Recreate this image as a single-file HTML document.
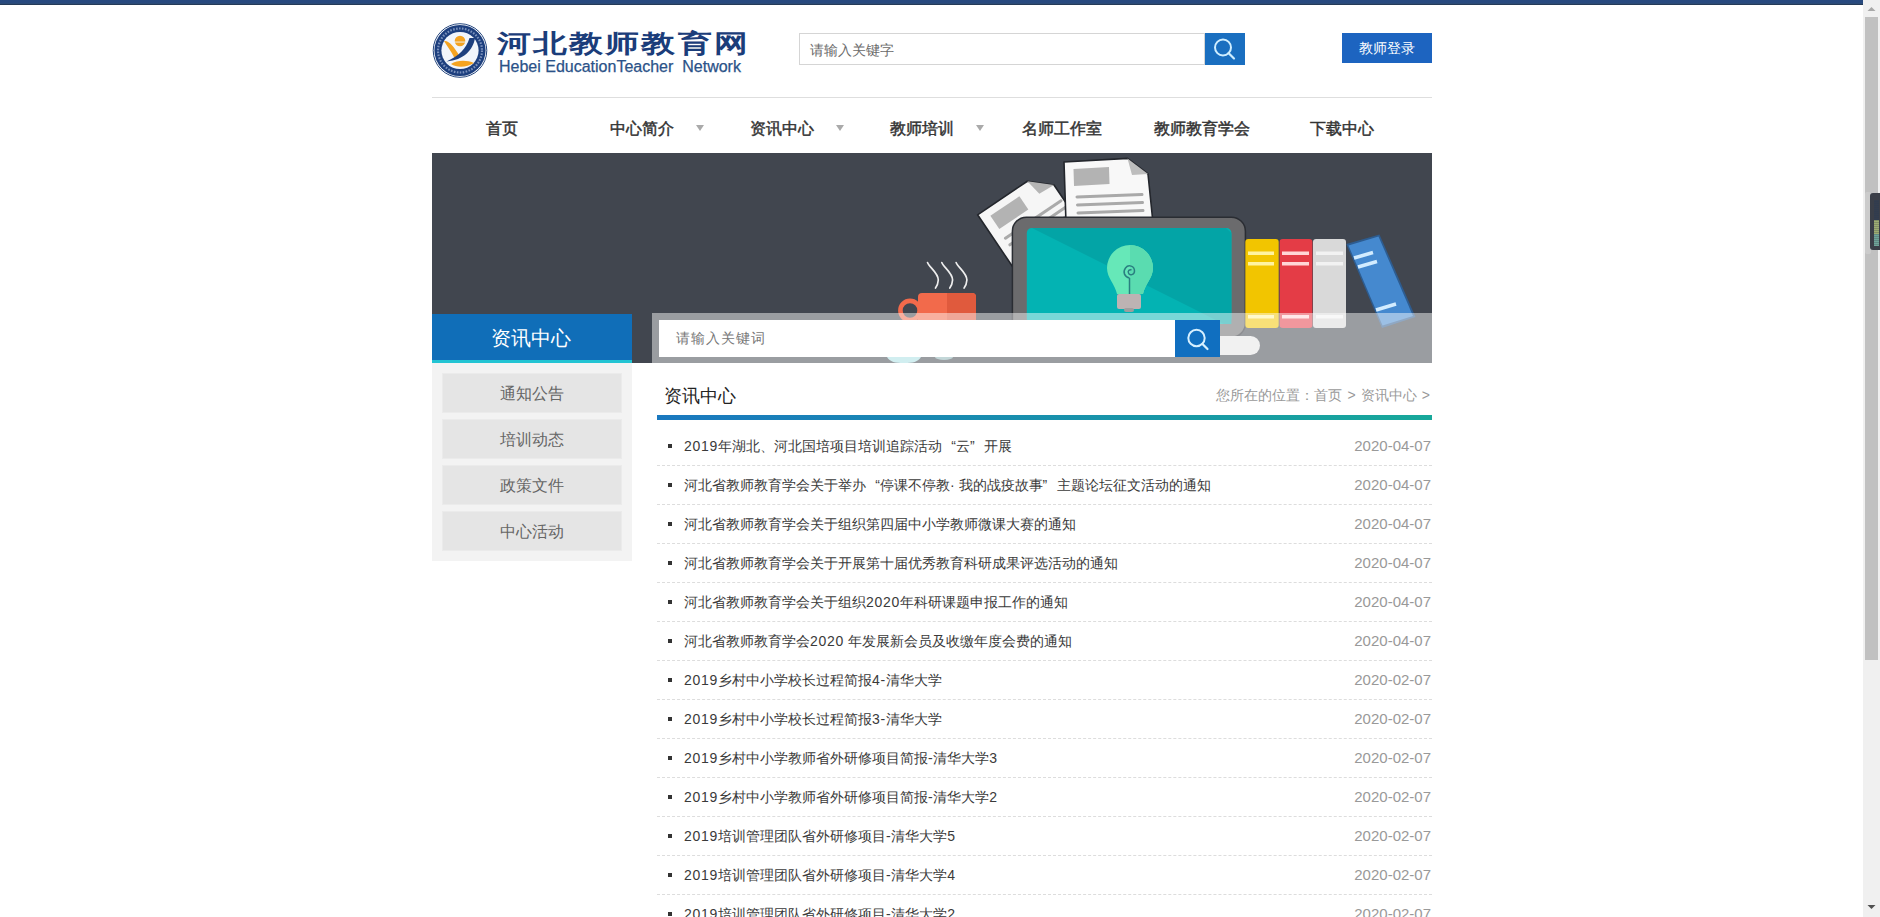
<!DOCTYPE html>
<html><head><meta charset="utf-8">
<style>
html,body{margin:0;padding:0;background:#fff;overflow:hidden;width:1880px;height:917px;}
body{font-family:"Liberation Sans",sans-serif;position:relative;}
.a{position:absolute;}
#topbar{left:0;top:0;width:1863px;height:4px;background:linear-gradient(#27497f 0,#27497f 60%,#2d4b72 100%);border-bottom:1px solid #243a58;}
#sb{left:1863px;top:0;width:17px;height:917px;background:#f0f0f0;}
#thumb{left:1865px;top:17px;width:13px;height:643px;background:#c1c1c1;}
.logo-cn{left:497px;top:26px;font-size:29px;font-weight:900;color:#1b3d7a;letter-spacing:2px;white-space:nowrap;line-height:40px;transform-origin:0 0;transform:scale(1.165,0.86);}
.logo-en{left:499px;top:57px;font-size:16px;-webkit-text-stroke:0.25px #2b5288;color:#2b5288;white-space:nowrap;line-height:20px;}
#sinput{left:799px;top:33px;width:404px;height:30px;border:1px solid #d5d5d5;}
#sinput span{position:absolute;left:10px;top:1px;line-height:30px;font-size:14px;color:#6a6a6a;}
#sbtn{left:1205px;top:33px;width:40px;height:32px;background:#1a6fc0;}
#login{left:1342px;top:33px;width:90px;height:30px;background:#1d64c0;color:#fff;font-size:14px;line-height:30px;text-align:center;}
#hr{left:432px;top:97px;width:1000px;height:1px;background:#dedede;}
.nav{top:111px;width:140px;height:36px;line-height:36px;text-align:center;font-size:16px;font-weight:normal;-webkit-text-stroke:0.45px #333;color:#333;}
.nav i{position:absolute;right:8px;top:14px;width:0;height:0;border-left:4px solid transparent;border-right:4px solid transparent;border-top:6px solid #aaa;}
#banner{left:432px;top:153px;width:1000px;height:210px;background:#41464f;overflow:hidden;}
#stitle{left:432px;top:314px;width:200px;height:45px;padding-top:1px;background:#106eb8;border-bottom:3px solid #22c4d3;color:#fff;font-size:20px;line-height:46px;text-indent:-2px;text-align:center;}
#side{left:432px;top:363px;width:200px;height:198px;background:#f3f3f3;}
.si{left:442px;width:178px;height:37px;padding-top:1px;background:#e5e5e5;border:1px solid #ebebeb;color:#666;font-size:16px;line-height:38px;text-align:center;}
#ctitle{left:664px;top:383px;font-size:18px;color:#222;line-height:26px;}
#crumb{left:1100px;width:330px;top:384px;font-size:14px;color:#999;text-align:right;line-height:22px;word-spacing:1.2px;}
#cline{left:657px;top:415px;width:775px;height:5px;background:linear-gradient(to right,#1a78bf,#17a89a);}
.row{left:657px;width:775px;height:38px;border-bottom:1px dashed #ddd;font-size:14px;line-height:38px;color:#3a3a3a;}
.row b{position:absolute;left:11px;top:17px;width:4px;height:4px;background:#333;}
.row span i{font-style:normal;}
.row span{position:absolute;left:27px;top:0;white-space:nowrap;}
.row em{position:absolute;right:1px;top:0;font-style:normal;color:#999;font-size:15px;letter-spacing:0px;}
.q{display:inline-block;width:14px;}
.d{letter-spacing:0.7px;}
.qa{text-align:right;}
</style></head><body>
<div class="a" id="topbar"></div>

<!-- logo -->
<svg class="a" style="left:432px;top:23px" width="56" height="56" viewBox="0 0 56 56">
  <circle cx="28" cy="27.5" r="26.8" fill="#fff" stroke="#27487f" stroke-width="1"/>
  <circle cx="28" cy="27.5" r="25.6" fill="#1d3f7e"/>
  <circle cx="28" cy="27.5" r="22" fill="none" stroke="#c9d6ee" stroke-width="2.2" stroke-dasharray="1.6 1.4" opacity="0.55"/>
  <circle cx="28" cy="27.5" r="18.6" fill="#f1f5fb"/>
  <circle cx="28" cy="18" r="5.3" fill="#f4a321"/>
  <rect x="22" y="18.6" width="12" height="0.9" fill="#f1f5fb"/>
  <path d="M12 18 C17 17 22 24 27 32 L22.5 35 C19 28 15 23 12 18z" fill="#f4a321"/>
  <path d="M43 15 C41 27 32 37 14.5 38.5 C27 33 34 26 37.5 15z" fill="#1d3f7e"/>
  <path d="M19 41 C25 37 35 37 42 40 C35 44.5 25 45 19 41z" fill="#f4a321"/>
</svg>
<div class="a logo-cn">河北教师教育网</div>
<div class="a logo-en">Hebei EducationTeacher&nbsp; Network</div>

<div class="a" id="sinput"><span>请输入关键字</span></div>
<div class="a" id="sbtn">
  <svg width="40" height="32" viewBox="0 0 40 32"><circle cx="18" cy="14.5" r="8" fill="none" stroke="#cfeeff" stroke-width="2"/><path d="M23.5 20 L29 25.5" stroke="#cfeeff" stroke-width="2.2" stroke-linecap="round"/></svg>
</div>
<div class="a" id="login">教师登录</div>
<div class="a" id="hr"></div>

<div class="a nav" style="left:432px">首页</div>
<div class="a nav" style="left:572px">中心简介<i></i></div>
<div class="a nav" style="left:712px">资讯中心<i></i></div>
<div class="a nav" style="left:852px">教师培训<i></i></div>
<div class="a nav" style="left:992px">名师工作室</div>
<div class="a nav" style="left:1132px">教师教育学会</div>
<div class="a nav" style="left:1272px">下载中心</div>

<div class="a" id="banner"><svg width="1000" height="210" viewBox="0 0 1000 210" style="position:absolute;left:0;top:0">
  <rect width="1000" height="210" fill="#41464f"/>
  <!-- paper 1 tilted -->
  <g transform="translate(545.6,61.8) rotate(-34)">
    <polygon points="0,0 60,0 80,18 80,130 0,130" fill="#f6f6f6" stroke="#23262c" stroke-width="1.6" stroke-linejoin="round"/>
    <polygon points="60,0 80,18 63,17" fill="#b5b5b5"/>
    <rect x="10" y="8" width="35" height="16" fill="#b3b3b3"/>
    <path d="M10 35 H77 M10 43 H78 M10 51 H78" stroke="#aaa" stroke-width="3" stroke-linecap="round"/>
  </g>
  <!-- paper 2 upright -->
  <polygon points="632,9 695.5,5.4 716,21 721,70 634,70" fill="#f8f8f8" stroke="#23262c" stroke-width="1.6" stroke-linejoin="round"/>
  <polygon points="695.5,5.4 716,21 700,22" fill="#bdbdbd"/>
  <polygon points="641.5,16 677,14 677.5,31 642,33" fill="#b3b3b3"/>
  <path d="M645 44 L710 41.5 M645.5 52 L710.5 49.5 M646 60 L711 57.5" stroke="#a9a9a9" stroke-width="3" stroke-linecap="round"/>
  <!-- monitor -->
  <rect x="580.4" y="64.2" width="233" height="120" rx="14" fill="#6b6b6d" stroke="#2a2d33" stroke-width="1.5"/>
  <rect x="594.8" y="75" width="204.6" height="96" rx="5" fill="#03b3b3"/>
  <polygon points="600,75 794,75 799.4,80 799.4,171 792,171" fill="#03a4a6"/>
  <!-- stand base -->
  <rect x="700" y="183" width="128" height="19" rx="9.5" fill="#e4e4e4"/>
  <!-- bulb -->
  <path d="M675 115 a23 23 0 1 1 46 0 c0 10 -8 16 -10 26 h-26 c-2 -10 -10 -16 -10 -26z" fill="#66e8b8"/>
  <path d="M698 92 a23 23 0 0 1 23 23 c0 10 -8 16 -10 26 h-13z" fill="#5adcb0"/>
  <path d="M697.5 141 v-16 M697.5 125 c-5 -1 -7 -6 -4 -10 c3 -4 9 -2 9 3 c0 4 -5 5 -6 2 c-1 -2 1 -4 3 -3" fill="none" stroke="#2a7f80" stroke-width="1.5"/>
  <rect x="685" y="141" width="24" height="15" rx="2" fill="#bdb3b3"/>
  <rect x="692" y="155" width="10" height="4" rx="2" fill="#9e9e9e"/>
  <!-- mug -->
  <circle cx="478" cy="157.5" r="9.6" fill="none" stroke="#f26a4b" stroke-width="4.6"/>
  <path d="M486 144 a4 4 0 0 1 4 -4 h50 a4 4 0 0 1 4 4 v40 h-58z" fill="#f26a4b"/>
  <path d="M515 140 h25 a4 4 0 0 1 4 4 v40 h-29z" fill="#e05a3d"/>
  <path d="M495.5 109.5 C497.0 114 506.5 120 506.3 127 C506.1 130 505.0 133 503.5 135 M509.8 109.5 C511.3 114 520.8 120 520.6 127 C520.4 130 519.3 133 517.8 135 M524.1 109.5 C525.6 114 535.1 120 534.9 127 C534.7 130 533.6 133 532.1 135" fill="none" stroke="#eeeeee" stroke-width="1.7" stroke-linecap="round"/>
  <!-- books -->
  <rect x="813.3" y="86" width="33.4" height="89" rx="3" fill="#f2c500"/>
  <rect x="847.6" y="86" width="32.8" height="89" rx="3" fill="#e43c46"/>
  <rect x="881" y="86" width="33" height="89" rx="3" fill="#d9d9d9"/>
  <g fill="#fff3a0"><rect x="816" y="98.5" width="26" height="3.5"/><rect x="816" y="109" width="26" height="3.5"/><rect x="816" y="162" width="26" height="3.5"/></g>
  <g fill="#ffd6d6"><rect x="850" y="98.5" width="27" height="3.5"/><rect x="850" y="109" width="27" height="3.5"/><rect x="850" y="162" width="27" height="3.5"/></g>
  <g fill="#f2f2f2"><rect x="884" y="98.5" width="27" height="3.5"/><rect x="884" y="109" width="27" height="3.5"/><rect x="884" y="162" width="27" height="3.5"/></g>
  <polygon points="914.3,91 947.5,81.5 983.5,164 950,175" fill="#2d5c90"/>
  <polygon points="916.5,92.5 946.5,83.5 981,163 950.5,172.5" fill="#4589cf"/>
  <path d="M922 105 L941 99.5 M926 114 L945 108.5 M944 157 L964 151" stroke="#d2ecff" stroke-width="3.5"/>
  <path d="M455 204 h34 c-3 5 -8 6 -17 6 c-9 0 -14 -1 -17 -6z" fill="#a8dfe2"/>
  <ellipse cx="512" cy="204" rx="9" ry="3" fill="#8fb4b6"/>
  <!-- overlay band -->
  <rect x="220" y="160" width="780" height="50" fill="#ffffff" fill-opacity="0.47"/>
  <!-- search -->
  <rect x="227" y="167" width="516" height="37" fill="#fff"/>
  <rect x="743" y="167" width="45" height="37" fill="#106fc0"/>
  <circle cx="764.5" cy="185" r="8.2" fill="none" stroke="#d6f0ff" stroke-width="2"/>
  <path d="M770.5 191 L775.5 196" stroke="#d6f0ff" stroke-width="2.2" stroke-linecap="round"/>
</svg><span style="position:absolute;left:244px;top:167px;line-height:37px;font-size:14px;letter-spacing:1px;color:#777">请输入关键词</span></div>

<div class="a" id="stitle">资讯中心</div>
<div class="a" id="side"></div>
<div class="a si" style="top:373px">通知公告</div>
<div class="a si" style="top:419px">培训动态</div>
<div class="a si" style="top:465px">政策文件</div>
<div class="a si" style="top:511px">中心活动</div>

<div class="a" id="ctitle">资讯中心</div>
<div class="a" id="crumb">您所在的位置：首页 &gt; 资讯中心 &gt;</div>
<div class="a" id="cline"></div>

<div class="a row" style="top:427px"><b></b><span><i class="d">2019</i>年湖北、河北国培项目培训追踪活动<i class="q qa">“</i>云<i class="q">”</i>开展</span><em>2020-04-07</em></div>
<div class="a row" style="top:466px"><b></b><span>河北省教师教育学会关于举办<i class="q qa">“</i>停课不停教· 我的战疫故事<i class="q">”</i>主题论坛征文活动的通知</span><em>2020-04-07</em></div>
<div class="a row" style="top:505px"><b></b><span>河北省教师教育学会关于组织第四届中小学教师微课大赛的通知</span><em>2020-04-07</em></div>
<div class="a row" style="top:544px"><b></b><span>河北省教师教育学会关于开展第十届优秀教育科研成果评选活动的通知</span><em>2020-04-07</em></div>
<div class="a row" style="top:583px"><b></b><span>河北省教师教育学会关于组织<i class="d">2020</i>年科研课题申报工作的通知</span><em>2020-04-07</em></div>
<div class="a row" style="top:622px"><b></b><span>河北省教师教育学会<i class="d">2020</i> 年发展新会员及收缴年度会费的通知</span><em>2020-04-07</em></div>
<div class="a row" style="top:661px"><b></b><span><i class="d">2019</i>乡村中小学校长过程简报<i class="d">4-</i>清华大学</span><em>2020-02-07</em></div>
<div class="a row" style="top:700px"><b></b><span><i class="d">2019</i>乡村中小学校长过程简报<i class="d">3-</i>清华大学</span><em>2020-02-07</em></div>
<div class="a row" style="top:739px"><b></b><span><i class="d">2019</i>乡村中小学教师省外研修项目简报<i class="d">-</i>清华大学<i class="d">3</i></span><em>2020-02-07</em></div>
<div class="a row" style="top:778px"><b></b><span><i class="d">2019</i>乡村中小学教师省外研修项目简报<i class="d">-</i>清华大学<i class="d">2</i></span><em>2020-02-07</em></div>
<div class="a row" style="top:817px"><b></b><span><i class="d">2019</i>培训管理团队省外研修项目<i class="d">-</i>清华大学<i class="d">5</i></span><em>2020-02-07</em></div>
<div class="a row" style="top:856px"><b></b><span><i class="d">2019</i>培训管理团队省外研修项目<i class="d">-</i>清华大学<i class="d">4</i></span><em>2020-02-07</em></div>
<div class="a row" style="top:895px"><b></b><span><i class="d">2019</i>培训管理团队省外研修项目<i class="d">-</i>清华大学<i class="d">2</i></span><em>2020-02-07</em></div>

<div class="a" id="sb"></div>
<div class="a" id="thumb"></div>
<svg class="a" style="left:1863px;top:0" width="17" height="917">
  <polygon points="4.5,11 8.5,7 12.5,11" fill="#a8a8a8"/>
  <polygon points="4.5,905 8.5,909 12.5,905" fill="#505050"/>
</svg>
<div class="a" style="left:1865px;top:192px;width:6px;height:62px;background:#cbcbcb;border-radius:2px"></div>
<svg class="a" style="left:1870px;top:193px" width="10" height="57">
  <rect x="0" y="0" width="14" height="57" rx="3" fill="#3b3f48"/>
  <rect x="4" y="7.5" width="5" height="1.2" fill="#2e3c52"/>
  <rect x="4" y="9.5" width="5" height="1.2" fill="#2e3c52"/>
  <rect x="4" y="11.5" width="5" height="1.2" fill="#2e3c52"/>
  <rect x="4" y="13.5" width="5" height="1.2" fill="#2e3c52"/>
  <rect x="4" y="15.5" width="5" height="1.2" fill="#2e3c52"/>
  <rect x="4" y="17.5" width="5" height="1.2" fill="#2e3c52"/>
  <rect x="4" y="19.5" width="5" height="1.2" fill="#2e3c52"/>
  <rect x="4" y="21.5" width="5" height="1.2" fill="#2e3c52"/>
  <rect x="4" y="23.5" width="5" height="1.2" fill="#2e3c52"/>
  <rect x="4" y="25.5" width="5" height="1.2" fill="#2e3c52"/>
  <rect x="4" y="27.5" width="5" height="1.2" fill="#c9df86"/>
  <rect x="4" y="29.5" width="5" height="1.2" fill="#c9df86"/>
  <rect x="4" y="31.5" width="5" height="1.2" fill="#c9df86"/>
  <rect x="4" y="33.5" width="5" height="1.2" fill="#c9df86"/>
  <rect x="4" y="35.5" width="5" height="1.2" fill="#c9df86"/>
  <rect x="4" y="37.5" width="5" height="1.2" fill="#c9df86"/>
  <rect x="4" y="39.5" width="5" height="1.2" fill="#c9df86"/>
  <rect x="4" y="41.5" width="5" height="1.2" fill="#86d2bd"/>
  <rect x="4" y="43.5" width="5" height="1.2" fill="#86d2bd"/>
  <rect x="4" y="45.5" width="5" height="1.2" fill="#86d2bd"/>
  <rect x="4" y="47.5" width="5" height="1.2" fill="#86d2bd"/>
  <rect x="4" y="49.5" width="5" height="1.2" fill="#86d2bd"/>
  <rect x="4" y="51.5" width="5" height="1.2" fill="#86d2bd"/>
</svg>
</body></html>
